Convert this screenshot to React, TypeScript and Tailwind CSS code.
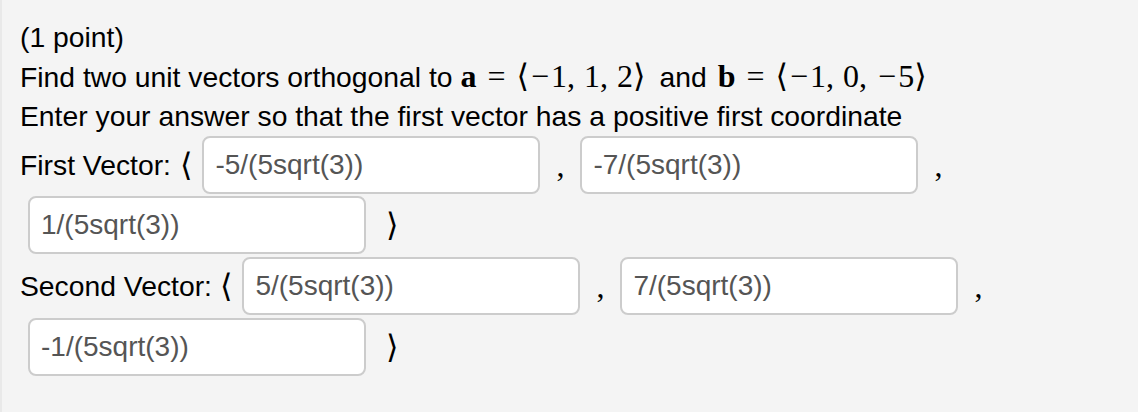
import React from 'react';

const sans = "font-['Liberation_Sans','Helvetica','Arial',sans-serif]";
const serif = "font-['Liberation_Serif','DejaVu_Serif','Times_New_Roman',serif]";

function AnswerBox({ value, className = '' }: { value: string; className?: string }) {
  return (
    <input
      readOnly
      value={value}
      className={`h-[58px] w-[338px] rounded-[8px] border-2 border-[#cccccc] bg-white px-[11px] text-[28px] text-[#555555] outline-none ${sans} ${className}`}
    />
  );
}

function Sep({ ch, className = '' }: { ch: string; className?: string }) {
  return <span className={`${serif} text-[32px] leading-none ${className}`}>{ch}</span>;
}

// one coordinate, minus signs get the wider TeX spacing
function Coord({ v }: { v: string }) {
  if (v.startsWith('−')) {
    return (
      <>
        <span className="mx-[2px]">−</span>
        {v.slice(1)}
      </>
    );
  }
  return <>{v}</>;
}

// vector written the way MathJax spaces it
function Vec({ name, parts }: { name: string; parts: string[] }) {
  return (
    <span className={`${serif} text-[32px]`}>
      <b>{name}</b>
      <span className="mx-[11px]">=</span>⟨
      {parts.map((p, i) => (
        <span key={i} className={i > 0 ? 'ml-[9px]' : ''}>
          <Coord v={p} />
          {i < parts.length - 1 ? ',' : ''}
        </span>
      ))}
      ⟩
    </span>
  );
}

function App() {
  return (
    <div className={`h-[412px] w-full overflow-hidden border-l-2 border-[#e9e9e9] bg-[#f4f4f4] pl-[18px] pt-[18px] text-[28.3px] leading-[39px] text-black ${sans}`}>
      <div>(1 point)</div>
      <div>
        Find two unit vectors orthogonal to <Vec name="a" parts={['−1', '1', '2']} />
        <span className="ml-[14px] mr-[11px]">and</span>
        <Vec name="b" parts={['−1', '0', '−5']} />
      </div>
      <div>Enter your answer so that the first vector has a positive first coordinate</div>

      <div className="flex items-center">
        <span>First Vector:</span>
        <Sep ch="⟨" className="ml-[9px]" />
        <AnswerBox value="-5/(5sqrt(3))" className="ml-[10px]" />
        <Sep ch="," className="ml-[16px]" />
        <AnswerBox value="-7/(5sqrt(3))" className="ml-[16px]" />
        <Sep ch="," className="ml-[16px]" />
      </div>
      <div className="mt-[2px] flex items-center">
        <AnswerBox value="1/(5sqrt(3))" className="ml-[8px]" />
        <Sep ch="⟩" className="ml-[20px]" />
      </div>
      <div className="mt-[3px] flex items-center">
        <span>Second Vector:</span>
        <Sep ch="⟨" className="ml-[8px]" />
        <AnswerBox value="5/(5sqrt(3))" className="ml-[10px]" />
        <Sep ch="," className="ml-[16px]" />
        <AnswerBox value="7/(5sqrt(3))" className="ml-[16px]" />
        <Sep ch="," className="ml-[16px]" />
      </div>
      <div className="mt-[3px] flex items-center">
        <AnswerBox value="-1/(5sqrt(3))" className="ml-[8px]" />
        <Sep ch="⟩" className="ml-[20px]" />
      </div>
    </div>
  );
}

export default App;
